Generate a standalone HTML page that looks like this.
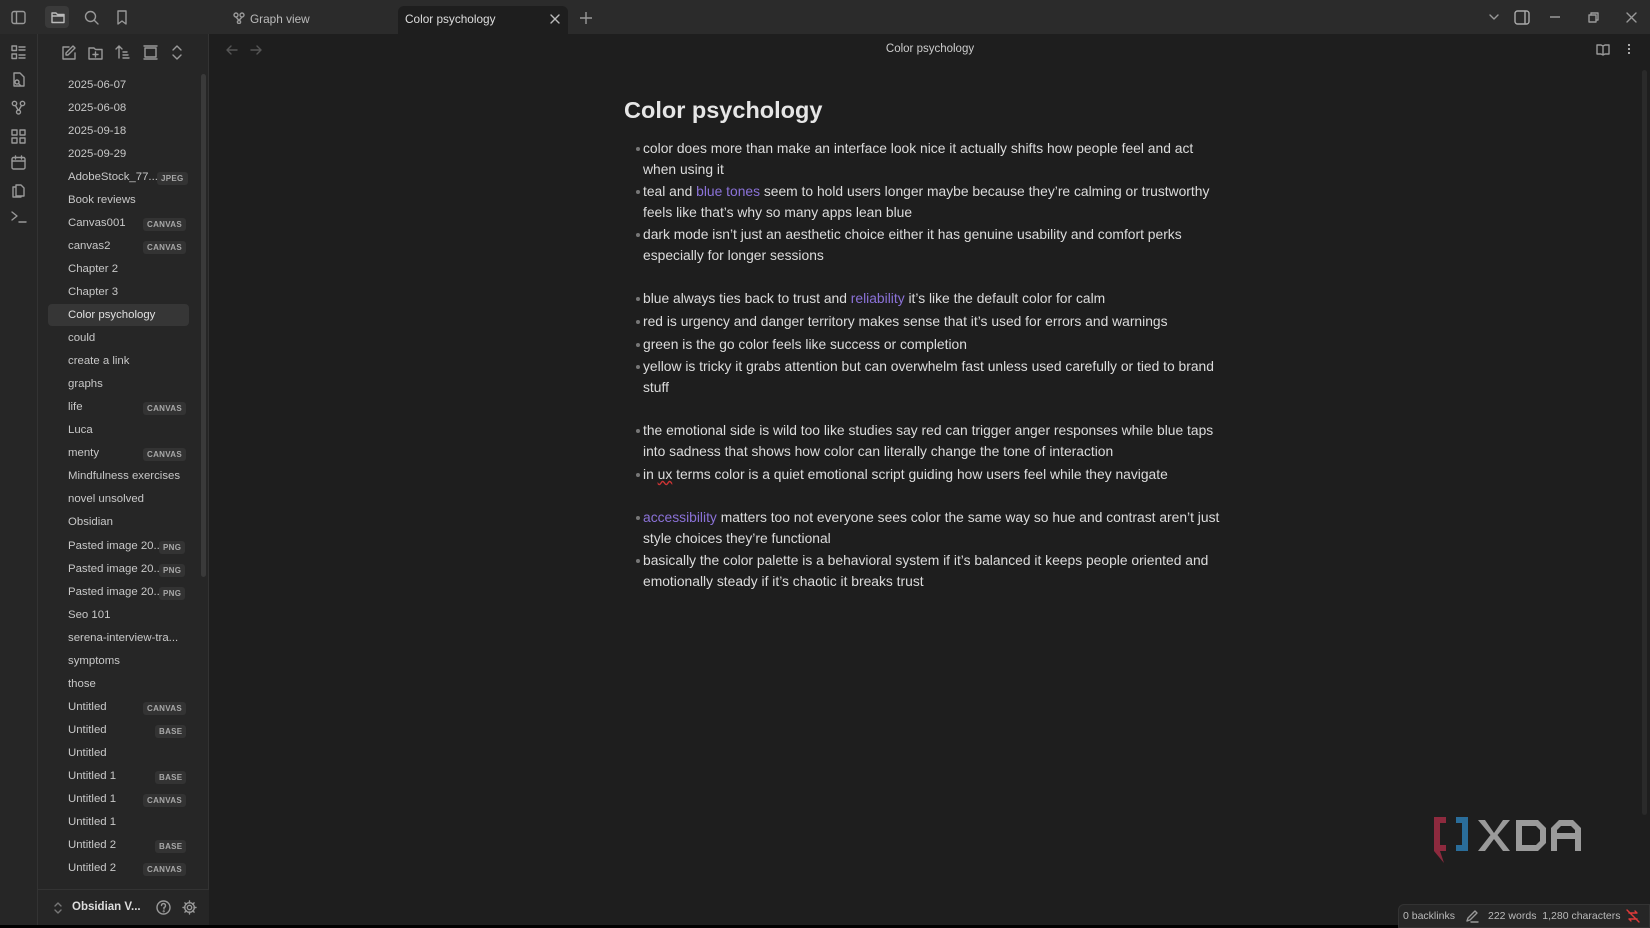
<!DOCTYPE html>
<html><head><meta charset="utf-8"><style>
*{margin:0;padding:0;box-sizing:border-box}
body{width:1650px;height:928px;background:#1e1e1e;font-family:"Liberation Sans",sans-serif;overflow:hidden;position:relative;color:#dadada}
.top{position:absolute;left:0;top:0;width:1650px;height:34px;background:#2b2b2b}
.ribbon{position:absolute;left:0;top:34px;width:38px;height:894px;background:#262626;border-right:1px solid #333}
.side{position:absolute;left:38px;top:34px;width:171px;height:894px;background:#262626;border-right:1px solid #333}
.ic{position:absolute;stroke:#999;fill:none;stroke-width:1.4;stroke-linecap:round;stroke-linejoin:round}
.f{position:absolute;left:68px;font-size:11.4px;color:#c8c8c8;white-space:nowrap}
.b{position:absolute;font-size:8px;font-weight:bold;color:#a8a8a8;background:#333;border-radius:3px;padding:2px 4px;letter-spacing:.3px}
.ct{position:absolute;left:624px;top:97px;font-size:23.5px;font-weight:bold;color:#e6e6e6}
.l{position:absolute;left:643px;font-size:13.85px;color:#dcdcdc;white-space:nowrap;line-height:21px}
.l::before{content:"";position:absolute;left:-7px;top:9px;width:4px;height:4px;border-radius:50%;background:#777}
.n{display:block}
a{color:#8b72d8;text-decoration:none}
</style></head><body>
<div class="top"></div>
<svg class="ic" style="left:11px;top:10px" width="16" height="16"><rect x="1" y="1.5" width="13" height="12" rx="2"/><line x1="5.5" y1="2" x2="5.5" y2="13"/></svg>
<div style="position:absolute;left:45px;top:6px;width:24px;height:22px;background:#3a3a3a;border-radius:4px"></div>
<svg class="ic" style="left:51px;top:10px;stroke:#bbb" width="14" height="14"><path d="M1 3h4l1.5 1.5H13v8H1z M1 6h12"/></svg>
<svg class="ic" style="left:84px;top:10px" width="15" height="15"><circle cx="6.5" cy="6.5" r="5"/><line x1="10.5" y1="10.5" x2="14" y2="14"/></svg>
<svg class="ic" style="left:116px;top:10px" width="12" height="15"><path d="M2 1h8v13l-4-3-4 3z"/></svg>
<svg class="ic" style="left:233px;top:12px" width="12" height="12"><circle cx="3" cy="3" r="2"/><circle cx="9" cy="3" r="2"/><circle cx="6" cy="10" r="1.6"/><path d="M3 5l3 3.5M9 5l-3 3.5"/></svg>
<div style="position:absolute;left:250px;top:12px;font-size:11.8px;color:#bbb">Graph view</div>
<div style="position:absolute;left:398px;top:6px;width:170px;height:28px;background:#1e1e1e;border-radius:6px 6px 0 0"></div>
<div style="position:absolute;left:405px;top:12px;font-size:11.8px;color:#ddd">Color psychology</div>
<svg class="ic" style="left:550px;top:14px;stroke:#bbb" width="10" height="10"><path d="M1 1l8 8M9 1l-8 8"/></svg>
<svg class="ic" style="left:580px;top:12px" width="12" height="12"><path d="M6 0v12M0 6h12"/></svg>
<svg class="ic" style="left:1489px;top:14px" width="10" height="7"><path d="M1 1l4 4 4-4"/></svg>
<svg class="ic" style="left:1514px;top:10px;stroke:#aaa" width="16" height="15"><rect x="1" y="1" width="14" height="13" rx="2.5"/><line x1="11" y1="2" x2="11" y2="13"/></svg>
<svg class="ic" style="left:1550px;top:16px" width="10" height="3"><line x1="0" y1="1" x2="10" y2="1"/></svg>
<svg class="ic" style="left:1588px;top:12px" width="11" height="11"><rect x="1" y="3" width="7" height="7"/><path d="M3 3V1h7v7H8"/></svg>
<svg class="ic" style="left:1626px;top:12px" width="11" height="11"><path d="M1 1l9 9M10 1l-9 9"/></svg>
<div class="ribbon"></div>
<svg class="ic" style="left:11px;top:45px" width="15" height="15"><rect x="1" y="1" width="4.5" height="4.5"/><rect x="1" y="9" width="4.5" height="4.5"/><path d="M8 2h6M8 5h6M8 10h6M8 13h6"/></svg>
<svg class="ic" style="left:11px;top:72px" width="15" height="16"><path d="M3 1h6l4 4v9H3z"/><circle cx="6" cy="10" r="2"/><path d="M7.5 11.5l2 2"/></svg>
<svg class="ic" style="left:11px;top:100px" width="15" height="15"><circle cx="3.5" cy="3.5" r="2.2"/><circle cx="11.5" cy="3.5" r="2.2"/><circle cx="7.5" cy="12" r="2"/><path d="M4.5 5.5L7 10M10.5 5.5L8 10"/></svg>
<svg class="ic" style="left:11px;top:129px" width="15" height="15"><rect x="1" y="1" width="5" height="5"/><rect x="9" y="1" width="5" height="5"/><rect x="1" y="9" width="5" height="5"/><rect x="9" y="9" width="5" height="5"/></svg>
<svg class="ic" style="left:11px;top:155px" width="15" height="15"><rect x="1" y="2.5" width="13" height="11.5" rx="1.5"/><path d="M1 6h13M4.5 1v3M10.5 1v3"/></svg>
<svg class="ic" style="left:11px;top:182px" width="15" height="16"><path d="M5 3h5l3 3v8H5z M5 5H2v10h8v-1"/></svg>
<svg class="ic" style="left:11px;top:211px" width="16" height="12"><path d="M1 1l5 4-5 4M8 11h7"/></svg>
<div class="side"></div>
<svg class="ic" style="left:61px;top:45px" width="15" height="15"><path d="M8 2H2v12h12V8"/><path d="M12 1l2 2-7 7H5V8z"/></svg>
<svg class="ic" style="left:88px;top:45px" width="15" height="15"><path d="M1 3h5l1.5 1.5H14V14H1z"/><path d="M7.5 7v5M5 9.5h5"/></svg>
<svg class="ic" style="left:115px;top:44px" width="15" height="16"><path d="M4 14V2M1 5l3-3 3 3M8 8h4M8 11h5M8 14h6"/></svg>
<svg class="ic" style="left:143px;top:45px" width="15" height="15"><rect x="2" y="3" width="11" height="9"/><path d="M1 1h13M1 14h13"/></svg>
<svg class="ic" style="left:172px;top:45px" width="10" height="15"><path d="M1 5l4-4 4 4M1 10l4 4 4-4"/></svg>
<div style="position:absolute;left:48px;top:304px;width:141px;height:22px;background:#363636;border-radius:4px"></div>
<div style="position:absolute;left:201px;top:74px;width:5px;height:503px;background:#3a3a3a;border-radius:3px"></div>
<div class="f" style="top:79px">2025-06-07</div>
<div class="f" style="top:102px">2025-06-08</div>
<div class="f" style="top:125px">2025-09-18</div>
<div class="f" style="top:148px">2025-09-29</div>
<div class="f" style="top:171px">AdobeStock_77...</div><div class="b" style="left:157px;top:172px">JPEG</div>
<div class="f" style="top:194px">Book reviews</div>
<div class="f" style="top:217px">Canvas001</div><div class="b" style="left:143px;top:218px">CANVAS</div>
<div class="f" style="top:240px">canvas2</div><div class="b" style="left:143px;top:241px">CANVAS</div>
<div class="f" style="top:263px">Chapter 2</div>
<div class="f" style="top:286px">Chapter 3</div>
<div class="f" style="top:309px;color:#e0e0e0">Color psychology</div>
<div class="f" style="top:332px">could</div>
<div class="f" style="top:355px">create a link</div>
<div class="f" style="top:378px">graphs</div>
<div class="f" style="top:401px">life</div><div class="b" style="left:143px;top:402px">CANVAS</div>
<div class="f" style="top:424px">Luca</div>
<div class="f" style="top:447px">menty</div><div class="b" style="left:143px;top:448px">CANVAS</div>
<div class="f" style="top:470px">Mindfulness exercises</div>
<div class="f" style="top:493px">novel unsolved</div>
<div class="f" style="top:516px">Obsidian</div>
<div class="f" style="top:540px">Pasted image 20...</div><div class="b" style="left:159px;top:541px">PNG</div>
<div class="f" style="top:563px">Pasted image 20...</div><div class="b" style="left:159px;top:564px">PNG</div>
<div class="f" style="top:586px">Pasted image 20...</div><div class="b" style="left:159px;top:587px">PNG</div>
<div class="f" style="top:609px">Seo 101</div>
<div class="f" style="top:632px">serena-interview-tra...</div>
<div class="f" style="top:655px">symptoms</div>
<div class="f" style="top:678px">those</div>
<div class="f" style="top:701px">Untitled</div><div class="b" style="left:143px;top:702px">CANVAS</div>
<div class="f" style="top:724px">Untitled</div><div class="b" style="left:155px;top:725px">BASE</div>
<div class="f" style="top:747px">Untitled</div>
<div class="f" style="top:770px">Untitled 1</div><div class="b" style="left:155px;top:771px">BASE</div>
<div class="f" style="top:793px">Untitled 1</div><div class="b" style="left:143px;top:794px">CANVAS</div>
<div class="f" style="top:816px">Untitled 1</div>
<div class="f" style="top:839px">Untitled 2</div><div class="b" style="left:155px;top:840px">BASE</div>
<div class="f" style="top:862px">Untitled 2</div><div class="b" style="left:143px;top:863px">CANVAS</div>
<div style="position:absolute;left:38px;top:889px;width:171px;height:39px;background:#262626;border-top:1px solid #333"></div>
<svg class="ic" style="left:54px;top:902px;stroke:#777" width="8" height="12"><path d="M1 4l3-3 3 3M1 8l3 3 3-3"/></svg>
<div style="position:absolute;left:72px;top:901px;font-size:11.5px;font-weight:bold;color:#ddd">Obsidian V...</div>
<svg class="ic" style="left:156px;top:900px" width="15" height="15"><circle cx="7.5" cy="7.5" r="6.5"/><path d="M5.5 5.5a2 2 0 1 1 2.5 2v1.5"/><circle cx="7.7" cy="11.3" r=".4"/></svg>
<svg class="ic" style="left:182px;top:900px" width="15" height="15"><circle cx="7.5" cy="7.5" r="2.2"/><path d="M7.5 1v2M7.5 12v2M1 7.5h2M12 7.5h2M2.9 2.9l1.4 1.4M10.7 10.7l1.4 1.4M2.9 12.1l1.4-1.4M10.7 4.3l1.4-1.4"/><circle cx="7.5" cy="7.5" r="4.8"/></svg>
<div style="position:absolute;left:0;top:925px;width:1650px;height:3px;background:#000"></div>
<svg class="ic" style="left:226px;top:45px;stroke:#555" width="12" height="10"><path d="M11 5H1M5 1L1 5l4 4"/></svg>
<svg class="ic" style="left:250px;top:45px;stroke:#555" width="12" height="10"><path d="M1 5h10M7 1l4 4-4 4"/></svg>
<div style="position:absolute;left:0;width:1860px;text-align:center;top:43px;font-size:11.5px;color:#ccc">Color psychology</div>
<svg class="ic" style="left:1596px;top:43px" width="14" height="13"><path d="M7 3v9M1 2h4l2 1 2-1h4v9H9l-2 1-2-1H1z"/></svg>
<div style="position:absolute;left:1628px;top:44px;width:2px;height:2px;background:#aaa;box-shadow:0 4px #aaa,0 8px #aaa"></div>
<div style="position:absolute;left:1642px;top:70px;width:5px;height:745px;background:#2a2a2a;border-radius:3px"></div>
<div class="ct">Color psychology</div>
<div class="l" style="top:138px">color does more than make an interface look nice it actually shifts how people feel and act<span class="n">when using it</span></div>
<div class="l" style="top:181px">teal and <a>blue tones</a> seem to hold users longer maybe because they’re calming or trustworthy<span class="n">feels like that’s why so many apps lean blue</span></div>
<div class="l" style="top:224px">dark mode isn’t just an aesthetic choice either it has genuine usability and comfort perks<span class="n">especially for longer sessions</span></div>
<div class="l" style="top:288px">blue always ties back to trust and <a>reliability</a> it’s like the default color for calm</div>
<div class="l" style="top:311px">red is urgency and danger territory makes sense that it’s used for errors and warnings</div>
<div class="l" style="top:334px">green is the go color feels like success or completion</div>
<div class="l" style="top:356px">yellow is tricky it grabs attention but can overwhelm fast unless used carefully or tied to brand<span class="n">stuff</span></div>
<div class="l" style="top:420px">the emotional side is wild too like studies say red can trigger anger responses while blue taps<span class="n">into sadness that shows how color can literally change the tone of interaction</span></div>
<div class="l" style="top:464px">in <span style="text-decoration:underline wavy #c33">ux</span> terms color is a quiet emotional script guiding how users feel while they navigate</div>
<div class="l" style="top:507px"><a>accessibility</a> matters too not everyone sees color the same way so hue and contrast aren’t just<span class="n">style choices they’re functional</span></div>
<div class="l" style="top:550px">basically the color palette is a behavioral system if it’s balanced it keeps people oriented and<span class="n">emotionally steady if it’s chaotic it breaks trust</span></div>
<svg style="position:absolute;left:1434px;top:817px" width="155" height="46">
<path d="M0 0h12v6H6v22h6v6H6l4 12-10-12z" fill="#8d2a3e"/>
<path d="M22 0h12v34H22v-6h6V6h-6z" fill="#2a6d9a"/>
<path d="M44 3h7l9 13 9-13h7L63.5 18 76 34h-7l-9-12-9 12h-7l12.5-16z" fill="#9a9a9a"/>
<path d="M82 3h22l8 8v15l-8 8H82zM88 9v19h14l4-4V13l-4-4z" fill="#9a9a9a"/>
<path d="M117 34V11l8-8h14l8 8v23h-6V22h-18v12zM123 16h18v-3l-4-4h-10l-4 4z" fill="#9a9a9a"/>
</svg>
<div style="position:absolute;left:1398px;top:904px;width:252px;height:24px;background:#262626;border:1px solid #333;border-radius:6px 0 0 0"></div>
<div style="position:absolute;left:1403px;top:910px;font-size:10.5px;color:#bbb;white-space:nowrap">0 backlinks</div>
<svg class="ic" style="left:1465px;top:909px" width="14" height="14"><path d="M2 12l1-3 7-7 2 2-7 7z M6 13h7"/></svg>
<div style="position:absolute;left:1488px;top:910px;font-size:10.5px;color:#bbb;white-space:nowrap">222 words&nbsp;&nbsp;1,280 characters</div>
<svg class="ic" style="left:1626px;top:909px;stroke:#e03a3a" width="14" height="14"><path d="M1 1l12 12M3 4h8l-2-2M11 10H3l2 2"/></svg>
</body></html>
